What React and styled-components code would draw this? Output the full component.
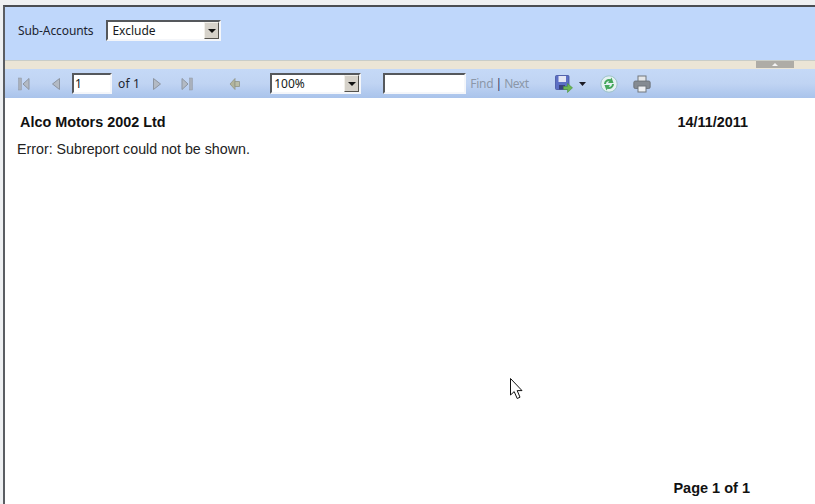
import React from "react";
import styled, { createGlobalStyle } from "styled-components";

const Global = createGlobalStyle`
  html, body {
    margin: 0;
    padding: 0;
    width: 815px;
    height: 504px;
    overflow: hidden;
    background: #eef0f2;
    font-family: "Noto Sans", sans-serif;
  }
`;

const Frame = styled.div`
  box-sizing: border-box;
  width: 815px;
  height: 504px;
  padding: 5px 0 0 3px;
  display: flex;
`;

const Window = styled.div`
  flex: 1;
  display: flex;
  flex-direction: column;
  border-top: 2px solid #4a4d52;
  border-left: 2px solid #5a5d62;
  background: #fff;
  min-width: 0;
`;

const ParamBar = styled.div`
  height: 53px;
  background: #bfd7fb;
  display: flex;
  align-items: flex-start;
  padding: 13px 0 0 13px;
  gap: 13px;
  box-sizing: border-box;
`;

const ParamLabel = styled.span`
  font-size: 12px;
  line-height: 22px;
  color: #1c2430;
  letter-spacing: -0.1px;
`;

const SelectBox = styled.div`
  box-sizing: border-box;
  width: ${(p) => p.$width}px;
  height: 21px;
  background: #fff;
  border: 2px solid;
  border-color: #55585c #f4f6fa #f4f6fa #55585c;
  display: flex;
  align-items: center;
  justify-content: space-between;
  padding-left: 4px;
  font-size: 12px;
  color: #161a20;
`;

const DropButton = styled.div`
  width: 15px;
  height: 17px;
  background: #d6d2ca;
  border: 1px solid;
  border-color: #f2f0ea #55534e #55534e #f2f0ea;
  box-sizing: border-box;
  display: flex;
  align-items: center;
  justify-content: center;
  &::after {
    content: "";
    border: 4px solid transparent;
    border-top: 4px solid #111;
    border-bottom: 0;
  }
`;

const Splitter = styled.div`
  height: 9px;
  background: #ebe5d6;
  border-top: 1px solid #c9cdc8;
  box-sizing: border-box;
  display: flex;
  justify-content: flex-end;
  padding-right: 21px;
`;

const CollapseHandle = styled.div`
  width: 38px;
  height: 7px;
  background: #aeaca6;
  display: flex;
  align-items: center;
  justify-content: center;
  &::after {
    content: "";
    border: 3px solid transparent;
    border-bottom: 3px solid #f4f4f4;
    border-top: 0;
  }
`;

const Toolbar = styled.div`
  height: 29px;
  background: linear-gradient(#c5d9f7 0%, #c0d4f3 50%, #a9c3eb 100%);
  display: flex;
  align-items: center;
  box-sizing: border-box;
  padding-left: 13px;
  font-size: 12px;
  color: #1c2430;
`;

const IconSlot = styled.div`
  display: flex;
  align-items: center;
  justify-content: center;
  flex: none;
  width: ${(p) => p.$w || 12}px;
  margin-left: ${(p) => p.$ml || 0}px;
  height: 20px;
`;

const PageInput = styled.div`
  box-sizing: border-box;
  flex: none;
  width: ${(p) => p.$width}px;
  height: 21px;
  margin-left: ${(p) => p.$ml || 0}px;
  background: #fff;
  border: 2px solid;
  border-color: #55585c #f4f6fa #f4f6fa #55585c;
  line-height: 17px;
  font-size: 12px;
  padding-left: 1px;
  color: #161a20;
`;

const ToolText = styled.span`
  margin-left: ${(p) => p.$ml || 0}px;
  color: ${(p) => p.$color || "#1c2430"};
  letter-spacing: ${(p) => p.$spacing || 0}px;
  white-space: nowrap;
`;

const ZoomSelect = styled(SelectBox)`
  flex: none;
  margin-left: 29px;
  padding-left: 2px;
`;

const Report = styled.div`
  flex: 1;
  display: flex;
  flex-direction: column;
  position: relative;
  font-family: "Liberation Sans", Arial, sans-serif;
  color: #111;
`;

const HeaderRow = styled.div`
  display: flex;
  justify-content: space-between;
  padding: 16px 67px 0 15px;
  font-size: 14.4px;
  font-weight: 700;
  line-height: 16px;
`;

const ErrorLine = styled.div`
  margin: 11px 0 0 12px;
  font-size: 14.25px;
  line-height: 16px;
  color: #222;
`;

const Footer = styled.div`
  margin-top: auto;
  padding: 0 65px 8px 0;
  text-align: right;
  font-size: 14.5px;
  font-weight: 700;
  line-height: 16px;
`;

const Cursor = styled.svg`
  position: absolute;
  left: 504px;
  top: 279px;
`;

const NavIcon = ({ dir, bar }) => (
  <svg width="12" height="14" viewBox="0 0 12 14" style={dir === "right" ? { transform: "scaleX(-1)" } : undefined}>
    {bar && <rect x="0.5" y="1" width="3" height="12" fill="#a9b0bb" stroke="#8f97a3" strokeWidth="0.5" />}
    <path d={bar ? "M11 1.5 L5 7 L11 12.5 Z" : "M10.5 1.5 L3.5 7 L10.5 12.5 Z"} fill="#b3bac4" stroke="#8d95a1" strokeWidth="1" />
  </svg>
);

function App() {
  return (
    <Frame>
      <Global />
      <Window>
        <ParamBar>
          <ParamLabel>Sub-Accounts</ParamLabel>
          <SelectBox $width={115}>
            Exclude
            <DropButton />
          </SelectBox>
        </ParamBar>
        <Splitter>
          <CollapseHandle />
        </Splitter>
        <Toolbar>
          <IconSlot>
            <NavIcon dir="left" bar />
          </IconSlot>
          <IconSlot $ml={19}>
            <NavIcon dir="left" />
          </IconSlot>
          <PageInput $width={40} $ml={11}>1</PageInput>
          <ToolText $ml={6} $spacing={0.2}>of 1</ToolText>
          <IconSlot $ml={12}>
            <NavIcon dir="right" />
          </IconSlot>
          <IconSlot $ml={17}>
            <NavIcon dir="right" bar />
          </IconSlot>
          <IconSlot $ml={36}>
            <svg width="12" height="14" viewBox="0 0 12 14">
              <path d="M6 1.5 L1 7 L6 12.5 Z" fill="#b2b49c" stroke="#8f9488" strokeWidth="0.8" />
              <path d="M6 4.5 H10.5 V9.5 H6 Z" fill="#b9bca6" stroke="#8f9488" strokeWidth="0.8" />
            </svg>
          </IconSlot>
          <ZoomSelect $width={91}>
            100%
            <DropButton />
          </ZoomSelect>
          <PageInput $width={83} $ml={22} />
          <ToolText $ml={4} $color="#8b97a8" $spacing={-0.2}>Find</ToolText>
          <ToolText $ml={2} $color="#2c3560">|</ToolText>
          <ToolText $ml={2} $color="#8b97a8" $spacing={-0.5}>Next</ToolText>
          <IconSlot $w={18} $ml={27}>
            <svg width="18" height="18" viewBox="0 0 18 18">
              <rect x="0.5" y="0.5" width="13.5" height="14" rx="1" fill="#5c6fc4" stroke="#4453a0" strokeWidth="0.8" />
              <rect x="3.5" y="1" width="7.5" height="6" fill="#e3e6f4" />
              <rect x="4" y="10" width="6" height="4.5" fill="#38427e" />
              <path d="M8.5 11.5 H12.5 V8.5 L17.5 12.8 L12.5 17.5 V14.5 H8.5 Z" fill="#6cb552" stroke="#4c9440" strokeWidth="0.6" />
            </svg>
          </IconSlot>
          <IconSlot $w={7} $ml={6}>
            <svg width="7" height="4" viewBox="0 0 7 4">
              <path d="M0 0 H7 L3.5 4 Z" fill="#1a1a24" />
            </svg>
          </IconSlot>
          <IconSlot $w={18} $ml={14}>
            <svg width="18" height="18" viewBox="0 0 18 18">
              <circle cx="9" cy="9" r="8.2" fill="#e4f1f2" stroke="#9cc2c8" strokeWidth="1" />
              <path d="M4 9 A5 5 0 0 1 10.5 4.2 L11.5 2.5 L13.5 8 H8 L9.3 6.2 A3 3 0 0 0 6 9 Z" fill="#46a85c" />
              <path d="M14 9 A5 5 0 0 1 7.5 13.8 L6.5 15.5 L4.5 10 H10 L8.7 11.8 A3 3 0 0 0 12 9 Z" fill="#46a85c" />
            </svg>
          </IconSlot>
          <IconSlot $w={18} $ml={15}>
            <svg width="18" height="18" viewBox="0 0 18 18">
              <rect x="5" y="1" width="8" height="6" fill="#e4e6e8" stroke="#70767c" strokeWidth="1" />
              <rect x="0.8" y="6" width="16.4" height="7.5" rx="1.5" fill="#858b92" stroke="#666c72" strokeWidth="0.8" />
              <rect x="5" y="11" width="8" height="6" fill="#eef0f2" stroke="#70767c" strokeWidth="1" />
            </svg>
          </IconSlot>
        </Toolbar>
        <Report>
          <HeaderRow>
            <span>Alco Motors 2002 Ltd</span>
            <span>14/11/2011</span>
          </HeaderRow>
          <ErrorLine>Error: Subreport could not be shown.</ErrorLine>
          <Footer>Page 1 of 1</Footer>
          <Cursor width="16" height="24" viewBox="0 0 16 24">
            <path d="M1.5 1.5 V18 L5.2 14.6 L8.2 21.5 L11 20.2 L8.2 13.6 H13 Z" fill="#fff" stroke="#111" strokeWidth="1" />
          </Cursor>
        </Report>
      </Window>
    </Frame>
  );
}

export default App;
